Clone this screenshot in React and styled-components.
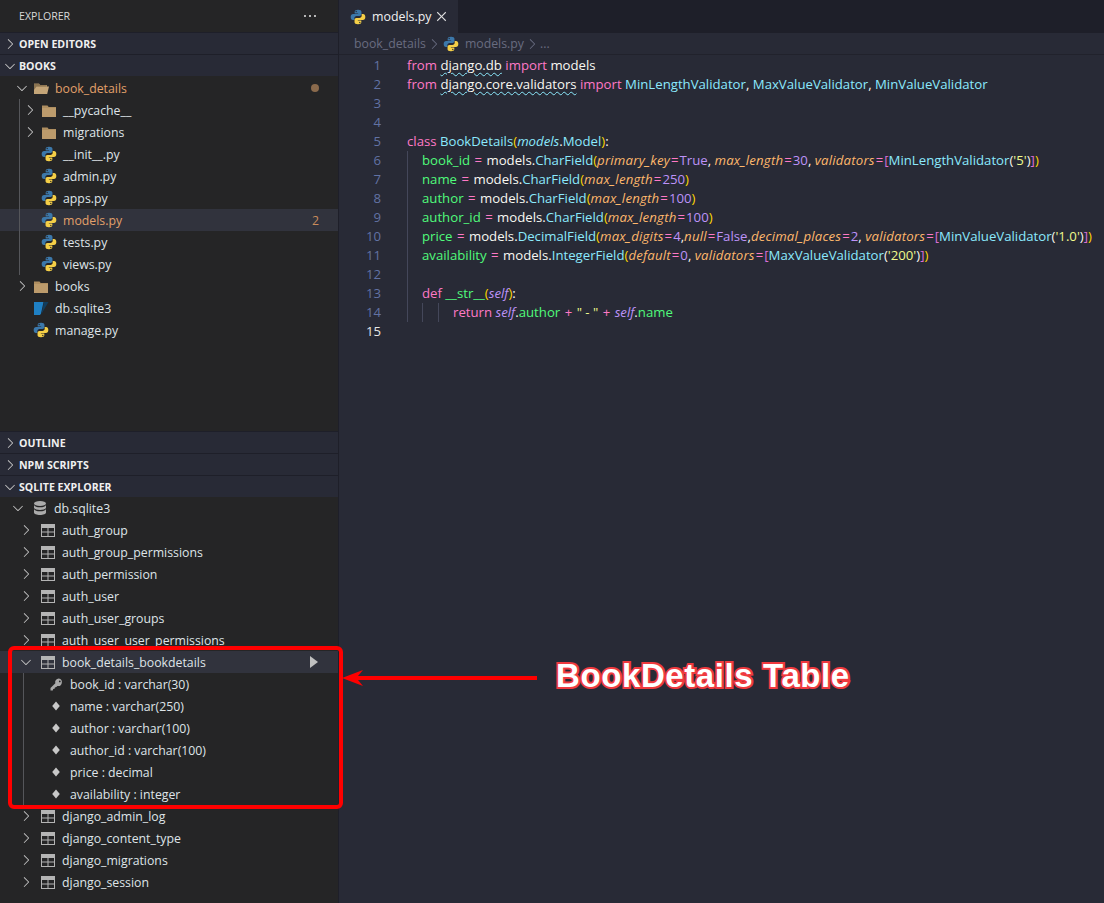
import React from 'react'
import styled, { createGlobalStyle } from 'styled-components'
import { VscChevronRight, VscChevronDown, VscClose, VscEllipsis } from 'react-icons/vsc'

const GlobalStyle = createGlobalStyle`
  html, body {
    margin: 0;
    padding: 0;
    background: #282a36;
  }
  * {
    box-sizing: border-box;
  }
`

const Page = styled.div`
  position: relative;
  display: flex;
  width: 1104px;
  height: 903px;
  overflow: hidden;
  font-family: "Open Sans", "Noto Sans", sans-serif;
  color: #d4d4d4;
`

const Sidebar = styled.aside`
  display: flex;
  flex-direction: column;
  width: 339px;
  flex-shrink: 0;
  background: #252526;
  border-right: 1px solid #1e1f29;
  font-size: 12.3px;
`

const SidebarTitle = styled.div`
  display: flex;
  align-items: center;
  justify-content: space-between;
  height: 32px;
  padding: 0 20px 0 19px;
  font-size: 10.6px;
  color: #d8d8d8;
  svg {
    font-size: 16px;
    color: #e8e8e8;
  }
`

const SectionHeader = styled.div`
  display: flex;
  align-items: center;
  height: 22px;
  padding-left: 2px;
  background: #282a36;
  border-top: 1px solid #1e1f29;
  font-size: 10.6px;
  font-weight: 700;
  color: #f0f0f0;
  svg {
    font-size: 16px;
    color: #c8c8c8;
    margin-right: 1px;
  }
`

const FileTree = styled.div`
  flex: 1;
  padding-top: 1px;
`

const TableTree = styled.div`
  padding-bottom: 10px;
`

const Nested = styled.div`
  position: relative;
  &::before {
    content: "";
    position: absolute;
    left: ${p => p.$guide}px;
    top: 0;
    bottom: 0;
    width: 1px;
    background: #55565a;
    z-index: 1;
  }
`

const Row = styled.div`
  display: flex;
  align-items: center;
  height: 22px;
  padding-left: ${p => p.$left}px;
  padding-right: 18px;
  white-space: nowrap;
  color: ${p => (p.$modified ? '#e2a06a' : '#dfe4e8')};
  background: ${p => (p.$active ? '#31333d' : 'transparent')};
`

const Twisty = styled.span`
  display: flex;
  align-items: center;
  justify-content: center;
  width: 16px;
  flex-shrink: 0;
  font-size: 16px;
  color: #c5c5c5;
`

const IconBox = styled.span`
  display: flex;
  align-items: center;
  justify-content: center;
  width: 16px;
  height: 16px;
  flex-shrink: 0;
  margin-left: ${p => p.$gap}px;
  margin-right: 6px;
`

const RowLabel = styled.span`
  flex: 1;
`

const ModifiedDot = styled.span`
  width: 8px;
  height: 8px;
  border-radius: 50%;
  background: #8a6a4c;
  margin-right: 1px;
`

const ProblemCount = styled.span`
  color: #c98d5c;
  margin-right: 1px;
`

const RunArrow = styled.span`
  width: 0;
  height: 0;
  border-left: 8px solid #c0c0c0;
  border-top: 6.5px solid transparent;
  border-bottom: 6.5px solid transparent;
  margin-right: 2px;
`

const Editor = styled.main`
  flex: 1;
  display: flex;
  flex-direction: column;
  min-width: 0;
  background: #282a36;
`

const TabBar = styled.div`
  display: flex;
  height: 33px;
  background: #1e1f29;
`

const Tab = styled.div`
  display: flex;
  align-items: center;
  width: 119px;
  padding-left: 11px;
  background: #282a36;
  color: #f0f0f0;
  font-size: 12.4px;
  span {
    margin-left: 6px;
    flex: 1;
  }
  svg.close {
    font-size: 17px;
    margin-right: 8px;
    color: #e0e0e0;
  }
`

const Breadcrumbs = styled.div`
  display: flex;
  align-items: center;
  height: 22px;
  padding-left: 15px;
  font-size: 12.3px;
  color: #686c80;
  border-bottom: 1px solid #21222c;
  svg.sep {
    font-size: 16px;
  }
`

const CrumbIcon = styled.span`
  display: flex;
  margin: 0 6px 0 1px;
`

const Code = styled.div`
  padding-top: 1px;
  font-size: 13.2px;
`

const CodeLine = styled.div`
  display: flex;
  height: 19px;
  line-height: 19px;
`

const LineNumber = styled.span`
  width: 42px;
  flex-shrink: 0;
  text-align: right;
  color: ${p => (p.$current ? '#e6e6e6' : '#6272a4')};
`

const LineText = styled.span`
  position: relative;
  margin-left: 26px;
  padding-left: ${p => p.$indent}px;
  white-space: pre;
`

const Guide = styled.i`
  position: absolute;
  left: ${p => p.$x}px;
  top: 0;
  bottom: 0;
  width: 1px;
  background: #44475a;
`

const tokenColors = {
  kw: '#ff79c6',
  op: '#ff79c6',
  cls: '#8be9fd',
  field: '#50fa7b',
  param: '#ffb86c',
  num: '#bd93f9',
  str: '#f1fa8c',
  plain: '#f8f8f2',
  gold: '#ffd700',
  pink: '#da70d6',
}

const Token = styled.span`
  color: ${p => tokenColors[p.$kind]};
  letter-spacing: ${p => (p.$kind === 'param' ? '0.2px' : 'normal')};
  padding: ${p => (p.$kind === 'op' ? '0 1px' : '0')};
  font-style: ${p => (p.$italic ? 'italic' : 'normal')};
  text-decoration: ${p => (p.$squiggle ? 'underline wavy #8be9fd 1px' : 'none')};
  text-underline-offset: 2px;
`

const Annotation = styled.div`
  position: absolute;
  left: 8px;
  top: 646px;
  width: 335px;
  height: 163px;
  border: 4px solid #ff0000;
  border-radius: 6px;
  pointer-events: none;
`

const ArrowDrawing = styled.svg`
  position: absolute;
  left: 342px;
  top: 667px;
`

const AnnotationLabel = styled.div`
  position: absolute;
  left: 556px;
  top: 656px;
  font-family: "Liberation Sans", Arial, sans-serif;
  font-size: 33px;
  letter-spacing: 0.6px;
  line-height: 40px;
  font-weight: 700;
  color: #ffffff;
  -webkit-text-stroke: 4px #ef3a3f;
  paint-order: stroke fill;
  white-space: nowrap;
`

const PY_BLUE = '#3c78aa'
const PY_YELLOW = '#f5cf47'
const PY_HALF =
  'M11.9 1C8.6 1 7 2.2 7 4v2.6h5.2v1H4.7C2.500 7.600 1 9.300 1 12.100c0 2.900 1.400 4.500 3.400 4.500h2.100v-2.900c0-1.900 1.500-3.300 3.400-3.300h4.500c1.700 0 2.800-1.200 2.800-2.800V4c0-1.900-1.900-3-4.800-3zM9.300 2.800a1 1 0 1 1 0 2 1 1 0 0 1 0-2z'

function PythonIcon() {
  return (
    <svg width="16" height="16" viewBox="0 0 24 24">
      <path fill={PY_BLUE} fillRule="evenodd" d={PY_HALF} />
      <path fill={PY_YELLOW} fillRule="evenodd" d={PY_HALF} transform="rotate(180 12 12)" />
    </svg>
  )
}

function FolderIcon({ open }) {
  if (open) {
    return (
      <svg width="16" height="14" viewBox="0 0 16 14">
        <path fill="#a58a62" d="M1 3.500 1 2.500h5l1 1.500h7v2H3.500L1 8z" />
        <path fill="#c4a578" d="M3.500 5.500H16l-1.800 7.500H1V4.500z" />
        <path fill="#8a7350" d="M1 3h5.500l1 1.200H13.500v1.300H3.500L1 9z" />
      </svg>
    )
  }
  return (
    <svg width="14" height="13" viewBox="0 0 14 13">
      <path fill="#ae8e60" d="M0 1.500h5.500l1.200 1.500H14v10H0z" />
      <path fill="#bc9b6c" d="M0 4h14v9H0z" />
    </svg>
  )
}

function SqliteFileIcon() {
  return (
    <svg width="15" height="15" viewBox="0 0 15 15">
      <path fill="#1f80c4" d="M0 1h9.500L7 12.500 6 14H0z" />
      <path fill="#103d5e" d="M10 1h4.500C13 3.500 10.500 8 7.500 13z" />
    </svg>
  )
}

function TableIcon() {
  return (
    <svg width="14" height="13" viewBox="0 0 14 13">
      <path fill="#b4b4b4" d="M0 0h14v13H0zM1 4v3.500h5.500V4zM7.500 4v3.500H13V4zM1 8.500V12h5.500V8.500zM7.500 8.500V12H13V8.500z" fillRule="evenodd" />
    </svg>
  )
}

function DatabaseIcon() {
  return (
    <svg width="12" height="14" viewBox="0 0 12 14" fill="#ababab">
      <ellipse cx="6" cy="2.500" rx="6" ry="2.500" />
      <path d="M0 4c.5 1.500 3 2.300 6 2.300S11.500 5.500 12 4v2.500C12 8 9.300 9 6 9S0 8 0 6.500z" />
      <path d="M0 8c.5 1.500 3 2.300 6 2.300s5.500-.8 6-2.300v3.500C12 13 9.300 14 6 14s-6-1-6-2.500z" />
    </svg>
  )
}

function KeyIcon() {
  return (
    <svg width="13" height="13" viewBox="0 0 13 13" fill="#a8a8a8">
      <path d="M8.800 0.500a3.700 3.700 0 0 0-3.500 4.800L0.500 10v2.500h2.300l.4-1.400 1.400-.3.300-1.400 1.400-.3 1.100-1.200A3.700 3.700 0 1 0 8.800.5zm1 2a.9.9 0 1 1 0 1.800.9.900 0 0 1 0-1.800z" fillRule="evenodd" />
    </svg>
  )
}

function DiamondIcon() {
  return (
    <svg width="10" height="10" viewBox="0 0 10 10">
      <path fill="#c8c8c8" d="M5 .5l3.800 4.500-3.800 4.500-3.800-4.500z" />
    </svg>
  )
}

function FileRow({ depth, name, icon, active, modified, expanded, hasTwisty, badge }) {
  return (
    <Row $left={14 + depth * 8} $active={active} $modified={modified}>
      <Twisty>
        {hasTwisty && (expanded ? <VscChevronDown /> : <VscChevronRight />)}
      </Twisty>
      <IconBox $gap={3}>{icon}</IconBox>
      <RowLabel>{name}</RowLabel>
      {badge}
    </Row>
  )
}

function DbRow({ depth, name, icon, expanded, hasTwisty = true, active, action }) {
  return (
    <Row $left={10 + depth * 8} $active={active}>
      <Twisty>
        {hasTwisty && (expanded ? <VscChevronDown /> : <VscChevronRight />)}
      </Twisty>
      <IconBox $gap={6}>{icon}</IconBox>
      <RowLabel>{name}</RowLabel>
      {action}
    </Row>
  )
}

const tablesBefore = [
  'auth_group',
  'auth_group_permissions',
  'auth_permission',
  'auth_user',
  'auth_user_groups',
  'auth_user_user_permissions',
]

const tablesAfter = [
  'django_admin_log',
  'django_content_type',
  'django_migrations',
  'django_session',
]

const columns = [
  ['book_id : varchar(30)', true],
  ['name : varchar(250)'],
  ['author : varchar(100)'],
  ['author_id : varchar(100)'],
  ['price : decimal'],
  ['availability : integer'],
]

const codeLines = [
  { tokens: [['kw', 'from '], ['plain', 'django.db', 'squiggle'], ['kw', ' import '], ['plain', 'models']] },
  { tokens: [['kw', 'from '], ['plain', 'django.core.validators', 'squiggle'], ['kw', ' import '], ['cls', 'MinLengthValidator'], ['plain', ', '], ['cls', 'MaxValueValidator'], ['plain', ', '], ['cls', 'MinValueValidator']] },
  { tokens: [] },
  { tokens: [] },
  { tokens: [['kw', 'class '], ['cls', 'BookDetails'], ['gold', '('], ['cls', 'models', 'italic'], ['plain', '.'], ['cls', 'Model'], ['gold', ')'], ['plain', ':']] },
  { indent: 15, guides: [0], tokens: [['field', 'book_id'], ['plain', ' '], ['op', '='], ['plain', ' models.'], ['cls', 'CharField'], ['gold', '('], ['param', 'primary_key', 'italic'], ['op', '='], ['num', 'True'], ['plain', ', '], ['param', 'max_length', 'italic'], ['op', '='], ['num', '30'], ['plain', ', '], ['param', 'validators', 'italic'], ['op', '='], ['pink', '['], ['cls', 'MinLengthValidator'], ['plain', '('], ['str', "'5'"], ['plain', ')'], ['pink', ']'], ['gold', ')']] },
  { indent: 15, guides: [0], tokens: [['field', 'name'], ['plain', ' '], ['op', '='], ['plain', ' models.'], ['cls', 'CharField'], ['gold', '('], ['param', 'max_length', 'italic'], ['op', '='], ['num', '250'], ['gold', ')']] },
  { indent: 15, guides: [0], tokens: [['field', 'author'], ['plain', ' '], ['op', '='], ['plain', ' models.'], ['cls', 'CharField'], ['gold', '('], ['param', 'max_length', 'italic'], ['op', '='], ['num', '100'], ['gold', ')']] },
  { indent: 15, guides: [0], tokens: [['field', 'author_id'], ['plain', ' '], ['op', '='], ['plain', ' models.'], ['cls', 'CharField'], ['gold', '('], ['param', 'max_length', 'italic'], ['op', '='], ['num', '100'], ['gold', ')']] },
  { indent: 15, guides: [0], tokens: [['field', 'price'], ['plain', ' '], ['op', '='], ['plain', ' models.'], ['cls', 'DecimalField'], ['gold', '('], ['param', 'max_digits', 'italic'], ['op', '='], ['num', '4'], ['plain', ','], ['param', 'null', 'italic'], ['op', '='], ['num', 'False'], ['plain', ','], ['param', 'decimal_places', 'italic'], ['op', '='], ['num', '2'], ['plain', ', '], ['param', 'validators', 'italic'], ['op', '='], ['pink', '['], ['cls', 'MinValueValidator'], ['plain', '('], ['str', "'1.0'"], ['plain', ')'], ['pink', ']'], ['gold', ')']] },
  { indent: 15, guides: [0], tokens: [['field', 'availability'], ['plain', ' '], ['op', '='], ['plain', ' models.'], ['cls', 'IntegerField'], ['gold', '('], ['param', 'default', 'italic'], ['op', '='], ['num', '0'], ['plain', ', '], ['param', 'validators', 'italic'], ['op', '='], ['pink', '['], ['cls', 'MaxValueValidator'], ['plain', '('], ['str', "'200'"], ['plain', ')'], ['pink', ']'], ['gold', ')']] },
  { guides: [0], tokens: [] },
  { indent: 15, guides: [0], tokens: [['kw', 'def '], ['field', '__str__'], ['gold', '('], ['num', 'self', 'italic'], ['gold', ')'], ['plain', ':']] },
  { indent: 46, guides: [0, 15, 31], tokens: [['kw', 'return '], ['num', 'self', 'italic'], ['plain', '.'], ['field', 'author'], ['plain', ' '], ['op', '+'], ['plain', ' '], ['str', '" - "'], ['plain', ' '], ['op', '+'], ['plain', ' '], ['num', 'self', 'italic'], ['plain', '.'], ['field', 'name']] },
  { tokens: [], current: true },
]

export default function App() {
  return (
    <Page>
      <GlobalStyle />
      <Sidebar>
        <SidebarTitle>
          EXPLORER
          <VscEllipsis />
        </SidebarTitle>
        <SectionHeader><VscChevronRight />OPEN EDITORS</SectionHeader>
        <SectionHeader><VscChevronDown />BOOKS</SectionHeader>
        <FileTree>
          <FileRow
            depth={0}
            name="book_details"
            hasTwisty
            expanded
            modified
            icon={<FolderIcon open />}
            badge={<ModifiedDot />}
          />
          <Nested $guide={19}>
            <FileRow depth={1} name="__pycache__" hasTwisty icon={<FolderIcon />} />
            <FileRow depth={1} name="migrations" hasTwisty icon={<FolderIcon />} />
            <FileRow depth={1} name="__init__.py" icon={<PythonIcon />} />
            <FileRow depth={1} name="admin.py" icon={<PythonIcon />} />
            <FileRow depth={1} name="apps.py" icon={<PythonIcon />} />
            <FileRow depth={1} name="models.py" active modified icon={<PythonIcon />} badge={<ProblemCount>2</ProblemCount>} />
            <FileRow depth={1} name="tests.py" icon={<PythonIcon />} />
            <FileRow depth={1} name="views.py" icon={<PythonIcon />} />
          </Nested>
          <FileRow depth={0} name="books" hasTwisty icon={<FolderIcon />} />
          <FileRow depth={0} name="db.sqlite3" icon={<SqliteFileIcon />} />
          <FileRow depth={0} name="manage.py" icon={<PythonIcon />} />
        </FileTree>
        <SectionHeader><VscChevronRight />OUTLINE</SectionHeader>
        <SectionHeader><VscChevronRight />NPM SCRIPTS</SectionHeader>
        <SectionHeader><VscChevronDown />SQLITE EXPLORER</SectionHeader>
        <TableTree>
          <DbRow depth={0} name="db.sqlite3" expanded icon={<DatabaseIcon />} />
          {tablesBefore.map(t => (
            <DbRow key={t} depth={1} name={t} icon={<TableIcon />} />
          ))}
          <DbRow
            depth={1}
            name="book_details_bookdetails"
            expanded
            active
            icon={<TableIcon />}
            action={<RunArrow />}
          />
          <Nested $guide={23}>
            {columns.map(([label, isKey]) => (
              <DbRow
                key={label}
                depth={2}
                name={label}
                hasTwisty={false}
                icon={isKey ? <KeyIcon /> : <DiamondIcon />}
              />
            ))}
          </Nested>
          {tablesAfter.map(t => (
            <DbRow key={t} depth={1} name={t} icon={<TableIcon />} />
          ))}
        </TableTree>
      </Sidebar>

      <Editor>
        <TabBar>
          <Tab>
            <PythonIcon />
            <span>models.py</span>
            <VscClose className="close" />
          </Tab>
        </TabBar>
        <Breadcrumbs>
          book_details
          <VscChevronRight className="sep" />
          <CrumbIcon><PythonIcon /></CrumbIcon>
          models.py
          <VscChevronRight className="sep" />
          ...
        </Breadcrumbs>
        <Code>
          {codeLines.map((line, i) => (
            <CodeLine key={i}>
              <LineNumber $current={line.current}>{i + 1}</LineNumber>
              <LineText $indent={line.indent || 0}>
                {(line.guides || []).map(x => <Guide key={x} $x={x} />)}
                {line.tokens.map(([kind, text, flag], j) => (
                  <Token
                    key={j}
                    $kind={kind}
                    $italic={flag === 'italic'}
                    $squiggle={flag === 'squiggle'}
                  >
                    {text}
                  </Token>
                ))}
              </LineText>
            </CodeLine>
          ))}
        </Code>
      </Editor>

      <Annotation />
      <ArrowDrawing width="200" height="22" viewBox="0 0 200 22">
        <path fill="#ff0000" d="M0 11 21 3 16 9H195V13H16L21 19z" />
      </ArrowDrawing>
      <AnnotationLabel>BookDetails Table</AnnotationLabel>
    </Page>
  )
}
